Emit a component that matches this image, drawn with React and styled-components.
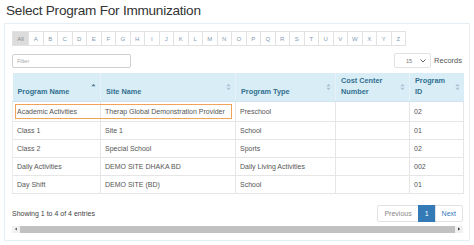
import React from "react";
import styled, { createGlobalStyle } from "styled-components";

const letters = ["All", ..."ABCDEFGHIJKLMNOPQRSTUVWXYZ".split("")];

const columns = [
	{ title: "Program Name", width: 88, sort: "asc" },
	{ title: "Site Name", width: 135, sort: "both" },
	{ title: "Program Type", width: 100, sort: "both" },
	{ title: ["Cost Center", "Number"], width: 74, sort: "both" },
	{ title: ["Program", "ID"], width: 54, sort: "both" },
];

const rows = [
	["Academic Activities", "Therap Global Demonstration Provider", "Preschool", "", "02"],
	["Class 1", "Site 1", "School", "", "01"],
	["Class 2", "Special School", "Sports", "", "02"],
	["Daily Activities", "DEMO SITE DHAKA BD", "Daily Living Activities", "", "002"],
	["Day Shift", "DEMO SITE (BD)", "School", "", "01"],
];

const SortIcon = ({ type }) => (
	<SortMark viewBox="0 0 6 9" width="5" height="8">
		<path d="M3 0.5 L5.5 3.5 H0.5 Z" fill={type === "asc" ? "#5a7f9a" : "#a9c3d3"} />
		{type === "both" && <path d="M3 8.5 L5.5 5.5 H0.5 Z" fill="#a9c3d3" />}
	</SortMark>
);

const App = () => {
	return (
		<>
			<GlobalStyle />
			<Title>Select Program For Immunization</Title>
			<Panel>
				<AlphaBar>
					{letters.map((l) => (
						<AlphaBtn key={l} $active={l === "All"}>
							{l}
						</AlphaBtn>
					))}
				</AlphaBar>
				<Controls>
					<FilterInput placeholder="Filter" />
					<RecordsBox>
						<Select>
							<span>15</span>
							<svg width="6" height="4" viewBox="0 0 6 4">
								<path d="M0.5 0.5 L3 3 L5.5 0.5" fill="none" stroke="#555" strokeWidth="0.9" />
							</svg>
						</Select>
						Records
					</RecordsBox>
				</Controls>
				<Table>
					<colgroup>
						{columns.map((c, i) => (
							<col key={i} style={{ width: c.width }} />
						))}
					</colgroup>
					<thead>
						<tr>
							{columns.map((c, i) => (
								<Th key={i}>
									{Array.isArray(c.title) ? (
										<>
											{c.title[0]}
											<br />
											{c.title[1]}
										</>
									) : (
										c.title
									)}
									<SortIcon type={c.sort} />
								</Th>
							))}
						</tr>
					</thead>
					<tbody>
						{rows.map((r, i) => (
							<Tr key={i} $first={i === 0}>
								{r.map((cell, j) => (
									<Td key={j} $focus={i === 0 ? (j === 0 ? "left" : j === 1 ? "right" : "") : ""}>
										{cell}
									</Td>
								))}
							</Tr>
						))}
					</tbody>
				</Table>
				<Footer>
					<Info>Showing 1 to 4 of 4 entries</Info>
					<Pager>
						<PageBtn $muted>Previous</PageBtn>
						<PageBtn $current>1</PageBtn>
						<PageBtn>Next</PageBtn>
					</Pager>
				</Footer>
				<ScrollBar>
					<ScrollArrow>
						<svg width="4" height="4" viewBox="0 0 4 4">
							<path d="M3 0.5 V3.5 L0.8 2 Z" fill="#666" />
						</svg>
					</ScrollArrow>
					<ScrollThumb />
					<ScrollArrow>
						<svg width="4" height="4" viewBox="0 0 4 4">
							<path d="M1 0.5 V3.5 L3.2 2 Z" fill="#333" />
						</svg>
					</ScrollArrow>
				</ScrollBar>
			</Panel>
		</>
	);
};

export default App;

const GlobalStyle = createGlobalStyle`
	body {
		margin: 0;
		background: #fff;
		font-family: "Liberation Sans", Arial, sans-serif;
		color: #555;
	}
`;

const Title = styled.h1`
	margin: 0;
	padding: 2px 0 0 6px;
	height: 23px;
	box-sizing: border-box;
	font-size: 13.6px;
	font-weight: normal;
	color: #333;
	line-height: 17px;
	letter-spacing: -0.25px;
`;

const Panel = styled.div`
	margin-left: 4px;
	width: 466px;
	height: 218px;
	box-sizing: border-box;
	border: 1px solid #e4eef3;
	border-right-color: #e8eef2;
	padding: 7px 6px 0 7px;
`;

const AlphaBar = styled.div`
	display: flex;
	margin-left: 1px;
	height: 15px;
`;

const AlphaBtn = styled.div`
	width: ${(p) => (p.$active ? "17px" : "15.5px")};
	height: 15px;
	box-sizing: border-box;
	display: flex;
	align-items: center;
	justify-content: center;
	border: 1px solid #e2e2e2;
	margin-left: -1px;
	font-size: 6px;
	color: ${(p) => (p.$active ? "#888" : "#7f9bb3")};
	background: ${(p) => (p.$active ? "#dcdcdc" : "#fff")};
`;

const Controls = styled.div`
	display: flex;
	justify-content: space-between;
	align-items: center;
	margin-top: 7px;
	height: 15px;
	padding-right: 1px;
`;

const FilterInput = styled.input`
	width: 119px;
	height: 14px;
	box-sizing: border-box;
	border: 1px solid #d0d0d0;
	border-radius: 2px;
	padding: 0 0 0 4px;
	font-family: inherit;
	font-size: 5.5px;
	color: #555;
	outline: none;

	&::placeholder {
		color: #a5a5a5;
	}
`;

const RecordsBox = styled.div`
	display: flex;
	align-items: center;
	gap: 3px;
	font-size: 7.5px;
	color: #555;
`;

const Select = styled.div`
	width: 37px;
	height: 15px;
	box-sizing: border-box;
	border: 1px solid #e2e2e2;
	border-radius: 2px;
	display: flex;
	align-items: center;
	justify-content: space-between;
	padding: 0 4px 0 11px;
	font-size: 5.5px;
	color: #777;
`;

const Table = styled.table`
	margin-top: 5px;
	width: 451px;
	border-collapse: collapse;
	table-layout: fixed;
	font-size: 7px;
`;

const Th = styled.th`
	position: relative;
	height: 28px;
	box-sizing: border-box;
	background: #d9edf7;
	color: #31708f;
	font-weight: bold;
	font-size: 7.3px;
	text-align: left;
	vertical-align: bottom;
	padding: 0 10px 4px 5px;
	line-height: 11px;
	border-right: 1px solid #e6f2f8;
	border-bottom: 1px solid #cfe3ee;

	&:last-child {
		border-right: none;
	}
`;

const SortMark = styled.svg`
	position: absolute;
	right: 4px;
	top: 10px;
`;

const Tr = styled.tr`
	height: ${(p) => (p.$first ? "20px" : "18px")};
`;

const Td = styled.td`
	position: relative;
	padding: 0 4px;
	color: #555;
	border: 1px solid #e6e6e6;
	border-top: none;
	white-space: nowrap;
	overflow: visible;

	&:first-child {
		border-left: 1px solid #ececec;
	}

	&::after {
		content: "";
		display: ${(p) => (p.$focus ? "block" : "none")};
		position: absolute;
		top: 2px;
		bottom: 2px;
		left: ${(p) => (p.$focus === "left" ? "2px" : "-1px")};
		right: ${(p) => (p.$focus === "right" ? "3px" : "-1px")};
		border: 1px solid #f0a35a;
		border-left-width: ${(p) => (p.$focus === "left" ? "1px" : "0")};
		border-right-width: ${(p) => (p.$focus === "right" ? "1px" : "0")};
		pointer-events: none;
	}
`;

const Footer = styled.div`
	display: flex;
	justify-content: space-between;
	align-items: center;
	margin-top: 11px;
	height: 17px;
	width: 451px;
`;

const Info = styled.div`
	font-size: 7px;
	color: #444;
`;

const Pager = styled.div`
	display: flex;
	height: 17px;
`;

const PageBtn = styled.div`
	display: flex;
	align-items: center;
	justify-content: center;
	box-sizing: border-box;
	padding: 0 6px;
	height: 17px;
	font-size: 7px;
	border: 1px solid ${(p) => (p.$current ? "#337ab7" : "#e2e2e2")};
	margin-left: -1px;
	background: ${(p) => (p.$current ? "#337ab7" : "#fff")};
	color: ${(p) => (p.$current ? "#fff" : p.$muted ? "#888" : "#337ab7")};
	min-width: ${(p) => (p.$current ? "17px" : "0")};
	border-radius: ${(p) => (p.$muted ? "2px 0 0 2px" : p.$current ? "0" : "0 2px 2px 0")};
`;

const ScrollBar = styled.div`
	display: flex;
	align-items: center;
	margin-top: 4px;
	width: 451px;
	height: 7px;
	background: #f1f1f1;
`;

const ScrollArrow = styled.div`
	width: 8px;
	height: 7px;
	display: flex;
	align-items: center;
	justify-content: center;
`;

const ScrollThumb = styled.div`
	flex: 1;
	height: 7px;
	background: #c1c1c1;
`;
